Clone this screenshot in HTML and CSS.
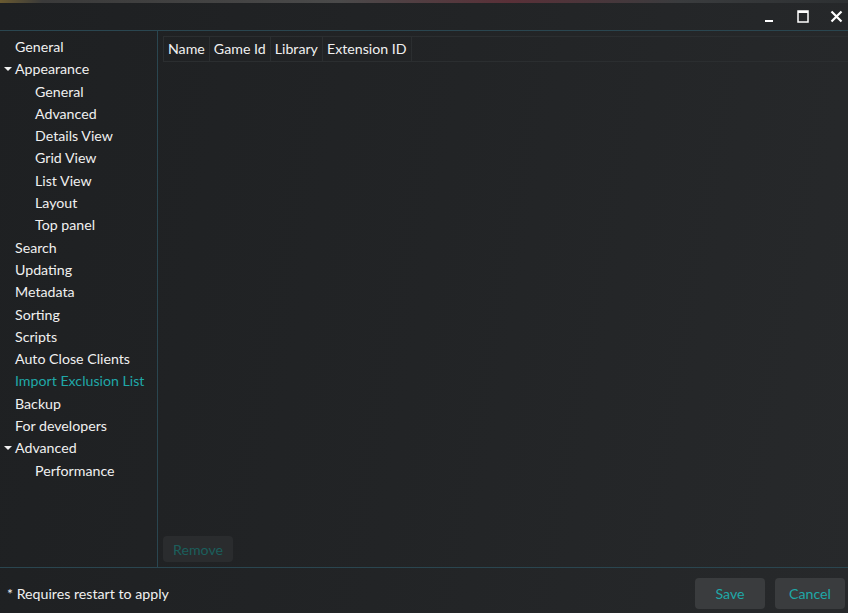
FILE: index.html
```html
<!DOCTYPE html>
<html lang="en">
<head>
    <meta charset="UTF-8">
    <title>Settings</title>
    <link rel="stylesheet" href="styles.css">
</head>
<body>
    <div class="strip"></div>
    <div class="titlebar">
        <span class="winbtn">
            <svg width="12" height="12" viewBox="0 0 12 12"><rect x="1" y="9" width="8" height="2" fill="#fff"/></svg>
        </span>
        <span class="winbtn">
            <svg width="13" height="13" viewBox="0 0 13 13"><rect x="1" y="1" width="10" height="11" fill="none" stroke="#fff" stroke-width="1.5"/><rect x="1" y="1" width="10" height="2" fill="#fff"/></svg>
        </span>
        <span class="winbtn">
            <svg width="13" height="13" viewBox="0 0 13 13"><path d="M1.5 1.5 L11.5 11.5 M11.5 1.5 L1.5 11.5" stroke="#fff" stroke-width="2.2"/></svg>
        </span>
    </div>
    <div class="main">
        <ul class="nav">
            <li>General</li>
            <li class="group">Appearance</li>
            <li class="sub">General</li>
            <li class="sub">Advanced</li>
            <li class="sub">Details View</li>
            <li class="sub">Grid View</li>
            <li class="sub">List View</li>
            <li class="sub">Layout</li>
            <li class="sub">Top panel</li>
            <li>Search</li>
            <li>Updating</li>
            <li>Metadata</li>
            <li>Sorting</li>
            <li>Scripts</li>
            <li>Auto Close Clients</li>
            <li class="active">Import Exclusion List</li>
            <li>Backup</li>
            <li>For developers</li>
            <li class="group">Advanced</li>
            <li class="sub">Performance</li>
        </ul>
        <div class="content">
            <div class="grid">
                <div class="head">
                    <span class="col">Name</span>
                    <span class="col">Game Id</span>
                    <span class="col">Library</span>
                    <span class="col">Extension ID</span>
                </div>
            </div>
            <button class="btn remove" disabled>Remove</button>
        </div>
    </div>
    <div class="footer">
        <span class="note">* Requires restart to apply</span>
        <div class="actions">
            <button class="btn">Save</button>
            <button class="btn">Cancel</button>
        </div>
    </div>
</body>
</html>
```

FILE: styles.css
```css
html, body {
  margin: 0;
  height: 100%;
}
body {
  width: 848px;
  height: 613px;
  overflow: hidden;
  display: flex;
  flex-direction: column;
  font-family: "Lato", "DejaVu Sans", sans-serif;
  font-size: 14.2px;
  color: #f0f0f0;
  background: linear-gradient(100deg, #1e2022 0%, #222426 50%, #27292b 100%);
}
.strip {
  height: 3px;
  background: linear-gradient(90deg, #6a5a30 0%, #3a3a3a 5%, #4a4a4a 40%, #5a3038 60%, #3a3c3e 80%, #2d3032 100%);
}
.titlebar {
  height: 27px;
  display: flex;
  justify-content: flex-end;
  align-items: center;
  gap: 9px;
  border-bottom: 1px solid #2a4650;
}
.winbtn {
  width: 24px;
  height: 27px;
  display: flex;
  align-items: center;
  justify-content: center;
}
.main {
  flex: 1;
  display: flex;
  min-height: 0;
}
.nav {
  list-style: none;
  margin: 0;
  padding: 5px 0 0 0;
  width: 157px;
  border-right: 1px solid #2a4650;
}
.nav li {
  height: 22.3px;
  line-height: 22px;
  padding-left: 15px;
  white-space: nowrap;
}
.nav li.sub {
  padding-left: 35px;
}
.nav li.group {
  position: relative;
}
.nav li.group::before {
  content: "";
  position: absolute;
  left: 4px;
  top: 9px;
  border-left: 4px solid transparent;
  border-right: 4px solid transparent;
  border-top: 4px solid #f0f0f0;
}
.nav li.active {
  color: #1fa8a8;
}
.content {
  flex: 1;
  display: flex;
  flex-direction: column;
  padding: 5px 0 5px 5px;
}
.grid {
  flex: 1;
}
.head {
  display: flex;
  height: 24px;
  border: 1px solid #2b2e30;
  border-right: none;
}
.col {
  padding: 0 4px;
  line-height: 23px;
  border-right: 1px solid #2b2e30;
}
.btn {
  font-family: inherit;
  font-size: 14.2px;
  color: #1fa8a8;
  background: #3a3c3e;
  border: none;
  border-radius: 4px;
  height: 31px;
  padding: 0 20px;
}
.remove {
  align-self: flex-start;
  height: 26px;
  padding: 0 10px;
  color: #1b5f5c;
  background: #2a2c2e;
}
.footer {
  height: 45px;
  display: flex;
  align-items: center;
  justify-content: space-between;
  border-top: 1px solid #2a4650;
  padding: 0 3px 0 7px;
}
.note {
  padding-top: 6px;
}
.actions {
  display: flex;
  gap: 10px;
  padding-top: 6px;
}
.actions .btn {
  width: 70px;
  padding: 0;
}
```
